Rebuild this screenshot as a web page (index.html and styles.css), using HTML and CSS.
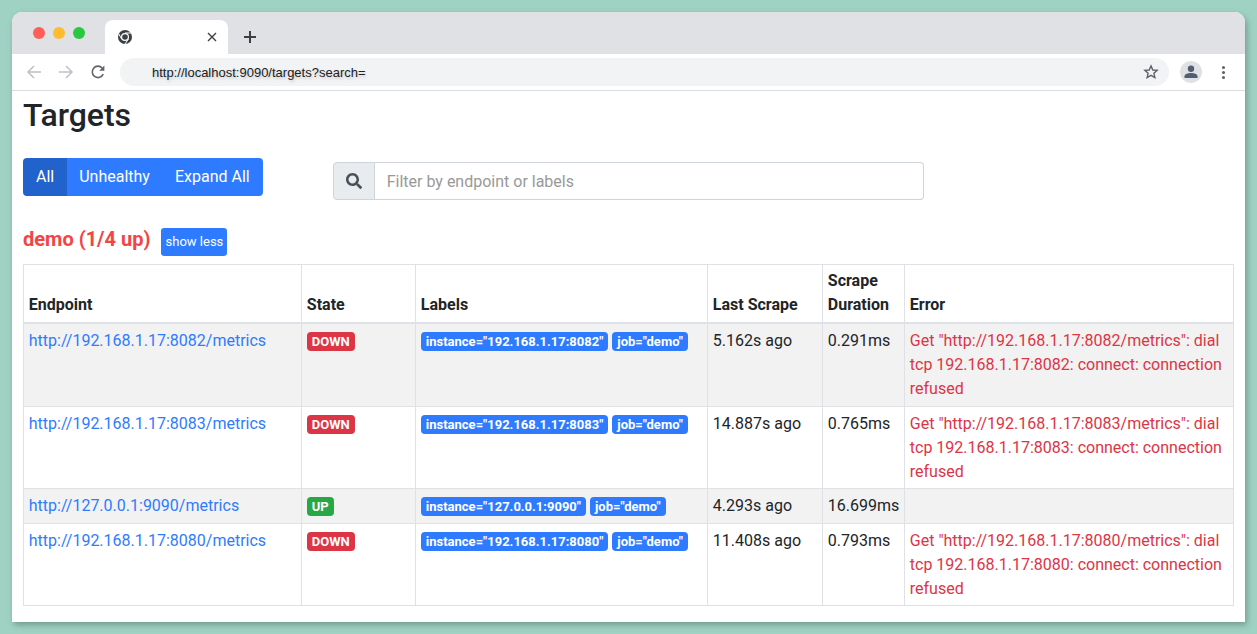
FILE: index.html
```html
<!DOCTYPE html>
<html lang="en">
<head>
<meta charset="utf-8">
<title>Targets</title>
<link rel="stylesheet" href="styles.css">
</head>
<body>
<div class="window">
  <div class="tabstrip">
    <div class="lights"><span class="light red"></span><span class="light yellow"></span><span class="light green"></span></div>
    <div class="tab">
      <svg class="chrome" width="16" height="16" viewBox="0 0 16 16"><circle cx="8" cy="8" r="7" fill="#3c4043"/><circle cx="8" cy="8" r="4" fill="#fff"/><circle cx="8" cy="8" r="2.8" fill="#3c4043"/><path d="M8 4H14.4M4.6 10 1.6 4.6M11.4 10 8 15" stroke="#fff" stroke-width="1" fill="none"/></svg>
      <svg class="close" width="10" height="10" viewBox="0 0 10 10"><path d="M1 1 9 9M9 1 1 9" stroke="#3c4043" stroke-width="1.4"/></svg>
    </div>
    <svg class="newtab" width="14" height="14" viewBox="0 0 14 14"><path d="M7 1V13M1 7H13" stroke="#3c4043" stroke-width="2"/></svg>
  </div>
  <div class="toolbar">
    <svg class="nav" width="16" height="16" viewBox="0 0 16 16"><path d="M15 8H2M8 2 2 8l6 6" fill="none" stroke="#bdc1c6" stroke-width="1.5"/></svg>
    <svg class="nav" width="16" height="16" viewBox="0 0 16 16"><path d="M1 8H14M8 2l6 6-6 6" fill="none" stroke="#bdc1c6" stroke-width="1.5"/></svg>
    <svg class="nav" width="16" height="16" viewBox="0 0 16 16"><path d="M13.2 10.2A5.7 5.7 0 1 1 12.2 4" fill="none" stroke="#5f6368" stroke-width="1.6"/><path d="M14.4 1.6V6.8H9.2Z" fill="#5f6368"/></svg>
    <div class="omnibox">
      <span class="url">http://localhost:9090/targets?search=</span>
      <svg width="16" height="16" viewBox="0 0 16 16"><path d="M8 1.9 9.8 6l4.4.4-3.3 2.9 1 4.3L8 11.3l-3.9 2.3 1-4.3-3.3-2.9L6.200 6Z" fill="none" stroke="#5f6368" stroke-width="1.4"/></svg>
    </div>
    <div class="avatar"><svg width="14" height="14" viewBox="0 0 14 14"><circle cx="7" cy="3.700" r="3.200" fill="#525f73"/><path d="M0.500 13V11.200C0.500 9 4 8 7 8s6.500 1 6.500 3.200V13Z" fill="#525f73"/></svg></div>
    <div class="kebab"><i></i><i></i><i></i></div>
  </div>
  <main class="page">
    <h1 class="title">Targets</h1>
    <div class="controls">
      <div class="btn-group">
        <button class="btn active">All</button>
        <button class="btn">Unhealthy</button>
        <button class="btn">Expand All</button>
      </div>
      <div class="filter">
        <span class="addon"><svg width="16" height="16" viewBox="0 0 512 512"><path fill="#495057" d="M505 442.700 405.300 343c-4.500-4.500-10.600-7-17-7H372c27.600-35.300 44-79.700 44-128C416 93.100 322.900 0 208 0S0 93.100 0 208s93.100 208 208 208c48.300 0 92.700-16.400 128-44v16.300c0 6.400 2.500 12.500 7 17l99.700 99.700c9.400 9.400 24.600 9.400 33.900 0l28.300-28.300c9.400-9.400 9.400-24.600.1-34zM208 336c-70.700 0-128-57.200-128-128 0-70.700 57.200-128 128-128 70.700 0 128 57.200 128 128 0 70.700-57.200 128-128 128z"/></svg></span>
        <input class="search" type="text" placeholder="Filter by endpoint or labels">
      </div>
    </div>
    <div class="pool-head">
      <h3 class="pool-name">demo (1/4 up)</h3>
      <button class="btn-small">show less</button>
    </div>
    <table class="targets">
      <colgroup>
        <col class="c1"><col class="c2"><col class="c3"><col class="c4"><col class="c5"><col class="c6">
      </colgroup>
      <thead>
        <tr><th>Endpoint</th><th>State</th><th>Labels</th><th>Last Scrape</th><th>Scrape Duration</th><th>Error</th></tr>
      </thead>
      <tbody>
        <tr class="odd">
          <td><a href="#">http://192.168.1.17:8082/metrics</a></td>
          <td><span class="badge down">DOWN</span></td>
          <td><span class="badge label">instance="192.168.1.17:8082"</span> <span class="badge label">job="demo"</span></td>
          <td>5.162s ago</td><td>0.291ms</td>
          <td class="err">Get "http://192.168.1.17:8082/metrics": dial tcp 192.168.1.17:8082: connect: connection refused</td>
        </tr>
        <tr>
          <td><a href="#">http://192.168.1.17:8083/metrics</a></td>
          <td><span class="badge down">DOWN</span></td>
          <td><span class="badge label">instance="192.168.1.17:8083"</span> <span class="badge label">job="demo"</span></td>
          <td>14.887s ago</td><td>0.765ms</td>
          <td class="err">Get "http://192.168.1.17:8083/metrics": dial tcp 192.168.1.17:8083: connect: connection refused</td>
        </tr>
        <tr class="odd">
          <td><a href="#">http://127.0.0.1:9090/metrics</a></td>
          <td><span class="badge up">UP</span></td>
          <td><span class="badge label">instance="127.0.0.1:9090"</span> <span class="badge label">job="demo"</span></td>
          <td>4.293s ago</td><td>16.699ms</td>
          <td class="err"></td>
        </tr>
        <tr>
          <td><a href="#">http://192.168.1.17:8080/metrics</a></td>
          <td><span class="badge down">DOWN</span></td>
          <td><span class="badge label">instance="192.168.1.17:8080"</span> <span class="badge label">job="demo"</span></td>
          <td>11.408s ago</td><td>0.793ms</td>
          <td class="err">Get "http://192.168.1.17:8080/metrics": dial tcp 192.168.1.17:8080: connect: connection refused</td>
        </tr>
      </tbody>
    </table>
  </main>
</div>
</body>
</html>
```
FILE: styles.css
```css
* { box-sizing: border-box; }
html, body { margin: 0; height: 100%; }
body {
  background: #a0d2c4;
  padding: 12px;
  font-family: Roboto, "Liberation Sans", sans-serif;
  font-size: 16px;
  line-height: 24px;
  color: #212529;
  overflow: hidden;
}
.window {
  width: 1233px;
  height: 610px;
  background: #fff;
  border-radius: 10px 10px 0 0;
  box-shadow: 2px 3px 6px rgba(60, 90, 80, .45);
  overflow: hidden;
}
.tabstrip {
  height: 42px;
  background: #dfe1e5;
  display: flex;
  align-items: flex-end;
}
.lights { display: flex; gap: 8px; padding: 0 0 15px 21px; width: 93px; }
.light { width: 12px; height: 12px; border-radius: 50%; }
.red { background: #ff5f57; }
.yellow { background: #febc2e; }
.green { background: #28c840; }
.tab {
  width: 123px;
  height: 34px;
  background: #fff;
  border-radius: 8px 8px 0 0;
  display: flex;
  align-items: center;
  justify-content: space-between;
  padding: 0 11px 0 12px;
}
.newtab { margin: 0 0 10px 15px; }
.toolbar {
  height: 37px;
  border-bottom: 1px solid #dadce0;
  display: flex;
  align-items: center;
  padding: 0 12px 0 14px;
}
.nav { margin-right: 16px; }
.nav:nth-child(3) { margin-right: 14px; }
.omnibox {
  width: 1049px;
  height: 28px;
  border-radius: 14px;
  background: #f1f3f4;
  display: flex;
  align-items: center;
  justify-content: space-between;
  padding: 0 10px 0 32px;
}
.url {
  font-family: "Liberation Sans", Arial, sans-serif;
  font-size: 13px;
  padding-top: 2px;
  color: #202124;
  text-shadow: 1px 2px 3px rgba(0,0,0,.18);
}
.avatar {
  width: 22px;
  height: 22px;
  border-radius: 50%;
  background: #dfe1e5;
  margin-left: 11px;
  display: flex;
  align-items: center;
  justify-content: center;
}
.kebab { display: flex; flex-direction: column; gap: 2px; margin-left: 20px; }
.kebab i { width: 3px; height: 3px; border-radius: 50%; background: #5f6368; }
.page { padding: 0 11px; }
.title {
  font-size: 32px;
  font-weight: 500;
  line-height: 38.400px;
  margin: 5px 0 0;
}
.controls { display: flex; align-items: flex-start; margin-top: 24px; }
.btn-group { display: flex; border-radius: 4px; overflow: hidden; }
.btn {
  font: 400 16px/24px Roboto, sans-serif;
  color: #fff;
  background: #2f7bff;
  border: 0;
  padding: 6px 13px 6px 12px;
  height: 38px;
}
.btn.active { background: #2162cc; padding: 6px 13px; }
.filter { display: flex; width: 591px; height: 38px; margin: 4px 0 0 70px; }
.addon {
  width: 42px;
  background: #e9ecef;
  border: 1px solid #ced4da;
  border-radius: 4px 0 0 4px;
  display: flex;
  align-items: center;
  justify-content: center;
}
.search {
  flex: 1;
  border: 1px solid #ced4da;
  border-left: 0;
  border-radius: 0 4px 4px 0;
  padding: 7px 12px 5px;
  font: 400 16px/24px Roboto, sans-serif;
  color: #495057;
  outline: 0;
}
.search::placeholder { color: #999; opacity: 1; }
.pool-head { display: flex; align-items: center; margin-top: 28px; height: 28px; }
.pool-name { font-size: 20px; font-weight: 700; color: #f44444; margin: 0 11px 6px 0; line-height: 24px; }
.btn-small {
  font: 400 13px/18px Roboto, sans-serif;
  color: #fff;
  background: #2f7bff;
  border: 0;
  border-radius: 3.200px;
  padding: 0;
  height: 28px;
  width: 66px;
  white-space: nowrap;
}
.targets {
  width: 1210px;
  margin-top: 8px;
  border-collapse: collapse;
  table-layout: fixed;
}
.c1 { width: 278px; }
.c2 { width: 114px; }
.c3 { width: 292px; }
.c4 { width: 115px; }
.c5 { width: 82px; }
.c6 { width: 329px; }
.targets th, .targets td {
  border: 1px solid #dee2e6;
  padding: 4.800px;
  vertical-align: top;
  text-align: left;
}
.targets th { vertical-align: bottom; border-bottom-width: 2px; font-weight: 700; padding-top: 4px; }
.targets tbody tr:last-child td { padding-bottom: 4px; }
.odd td { background: #f2f2f2; }
.targets a { color: #2f7bff; text-decoration: none; }
.err { color: #dc3545; }
.badge {
  display: inline-block;
  font-size: 13px;
  font-weight: 700;
  line-height: 13px;
  padding: 3px 5px;
  border-radius: 4px;
  color: #fff;
  vertical-align: 0;
}
.down { background: #dc3545; }
.up { background: #28a745; }
.label { background: #2f7bff; }
```
